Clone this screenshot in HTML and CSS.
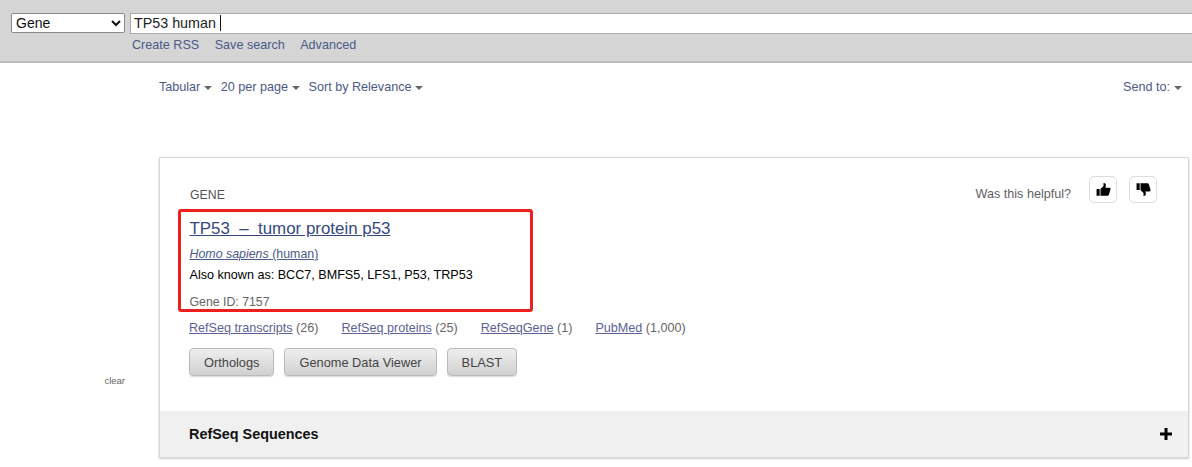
FILE: index.html
```html
<!DOCTYPE html>
<html lang="en">
<head>
<meta charset="utf-8">
<title>TP53 human - Gene</title>
<link rel="stylesheet" href="styles.css">
</head>
<body>
<header class="searchbar">
  <div class="search-row">
    <select class="db-select"><option>Gene</option></select>
    <div class="term">TP53 human <span class="caret"></span></div>
  </div>
  <nav class="search-links">
    <a>Create RSS</a><a>Save search</a><a>Advanced</a>
  </nav>
</header>
<div class="content">
  <aside class="left"><span class="clear">clear</span></aside>
  <main class="main">
    <div class="toolbar">
      <div class="display">
        <a class="drop">Tabular</a>
        <a class="drop">20 per page</a>
        <a class="drop">Sort by Relevance</a>
      </div>
      <a class="drop">Send to:</a>
    </div>
    <section class="card">
      <div class="card-body">
        <div class="card-head">
          <div class="label">GENE</div>
          <div class="helpful">
            <span>Was this helpful?</span>
            <button class="thumb" aria-label="Yes">
              <svg width="15" height="15" viewBox="0 0 16 16"><path d="M.6 7.500h3.300v7.200H.6zM4.800 7.500 8 4.200V1c1.700-.2 2.800 1.100 2.500 2.700L10.100 6h4.200c1 0 1.500.9 1.200 1.700l-1.800 5.900c-.2.700-.7 1.100-1.400 1.100H4.800z"/></svg>
            </button>
            <button class="thumb" aria-label="No">
              <svg width="15" height="15" viewBox="0 0 16 16"><path d="M.6 8.500h3.300V1.300H.6zM4.800 8.500 8 11.800V15c1.700.2 2.800-1.100 2.500-2.700L10.100 10h4.200c1 0 1.500-.9 1.200-1.700l-1.800-5.900c-.2-.7-.7-1.100-1.400-1.100H4.800z"/></svg>
            </button>
          </div>
        </div>
        <div class="highlight">
          <a class="title">TP53 &nbsp;&ndash;&nbsp; tumor protein p53</a>
          <div class="organism"><a><em>Homo sapiens</em> (human)</a></div>
          <div class="aka">Also known as: BCC7, BMFS5, LFS1, P53, TRP53</div>
          <div class="geneid">Gene ID: 7157</div>
        </div>
        <div class="related">
          <span><a>RefSeq transcripts</a> (26)</span>
          <span><a>RefSeq proteins</a> (25)</span>
          <span><a>RefSeqGene</a> (1)</span>
          <span><a>PubMed</a> (1,000)</span>
        </div>
        <div class="actions">
          <button class="action">Orthologs</button>
          <button class="action">Genome Data Viewer</button>
          <button class="action">BLAST</button>
        </div>
      </div>
      <div class="accordion">
        <span>RefSeq Sequences</span>
        <svg width="14" height="14" viewBox="0 0 14 14"><path d="M5.500 1h3v4.500H13v3H8.500V13h-3V8.500H1v-3h4.500z"/></svg>
      </div>
    </section>
  </main>
</div>
</body>
</html>
```
FILE: styles.css
```css
* { box-sizing: border-box; }
html, body { margin: 0; padding: 0; }
body {
  width: 1192px;
  height: 467px;
  overflow: hidden;
  background: #fff;
  font-family: "Liberation Sans", Arial, sans-serif;
  font-size: 12px;
  color: #333;
}
a { color: #4a5a88; }

.searchbar {
  height: 63px;
  background: #d5d5d5;
  border-bottom: 2px solid #bdbdbd;
  padding: 13px 0 0 11px;
}
.search-row { display: flex; gap: 5px; }
.db-select {
  width: 114px;
  height: 20px;
  padding: 0;
  font: 14px "Liberation Sans", Arial, sans-serif;
  color: #111;
  background: #fff;
  border: 1px solid #8a8a8a;
  border-radius: 2px;
}
.term {
  flex: 1;
  height: 21px;
  background: #fff;
  border: 1px solid #aaa;
  border-right: 0;
  padding-left: 3px;
  font-size: 14.3px;
  line-height: 19px;
  color: #222;
}
.caret {
  display: inline-block;
  width: 1px;
  height: 16px;
  background: #111;
  vertical-align: -3px;
}
.search-links {
  display: flex;
  gap: 15.5px;
  padding: 4px 0 0 121px;
  font-size: 12.6px;
  line-height: 15px;
}

.content { display: flex; }
.left { width: 159px; flex: none; padding: 310px 34px 0 0; text-align: right; }
.clear { font-size: 9.5px; line-height: 12px; color: #666; }
.main { width: 1030px; flex: none; }

.toolbar {
  display: flex;
  justify-content: space-between;
  padding: 16px 7px 0 0;
  height: 94px;
  font-size: 12.6px;
  line-height: 17px;
}
.display { display: flex; gap: 8.5px; }
.drop::after {
  content: "";
  display: inline-block;
  margin-left: 4px;
  border-left: 4px solid transparent;
  border-right: 4px solid transparent;
  border-top: 4px solid #666;
  vertical-align: 1px;
}

.card {
  height: 301px;
  border: 1px solid #d6d6d6;
  box-shadow: 0 1px 2px rgba(0,0,0,.2);
  display: flex;
  flex-direction: column;
  justify-content: space-between;
}
.card-body { padding: 23px 31px 0 29px; }
.card-head { display: flex; justify-content: space-between; height: 28px; }
.label { font-size: 12.3px; line-height: 28px; color: #555; margin-left: 1px; }
.helpful { display: flex; gap: 12px; color: #5f5f66; font-size: 12.6px; line-height: 26px; }
.helpful > span { margin-right: 6px; }
.thumb {
  width: 28px;
  height: 27px;
  margin-top: -5px;
  padding: 0;
  display: flex;
  align-items: center;
  justify-content: center;
  background: #fff;
  border: 1px solid #ddd;
  border-radius: 5px;
}
.highlight {
  width: 355px;
  height: 103px;
  margin-left: -11px;
  padding: 6px 0 0 8.500px;
  border: 3px solid #f01f1f;
  border-radius: 3px;
}
.title {
  display: block;
  font-size: 16.9px;
  line-height: 21px;
  text-decoration: underline;
  color: #34487e;
}
.organism { margin-top: 8px; font-size: 12.4px; line-height: 15px; }
.organism a { text-decoration: underline; }
.aka { margin-top: 6px; font-size: 12.6px; line-height: 15px; color: #000; }
.geneid { margin-top: 12px; font-size: 12.3px; line-height: 15px; color: #666; }
.related {
  display: flex;
  gap: 23px;
  padding-top: 8px;
  font-size: 12.6px;
  line-height: 16px;
  color: #666;
}
.related a { color: #5c6296; text-decoration: underline; }
.actions { display: flex; gap: 10px; padding-top: 12px; }
.action {
  height: 28px;
  padding: 0 14px;
  font: 12.8px "Liberation Sans", Arial, sans-serif;
  color: #444;
  background: linear-gradient(#efefef, #d0d0d0);
  border: 1px solid #bbb;
  border-radius: 4px;
  box-shadow: 0 1px 1px rgba(0,0,0,.15);
}
.accordion {
  height: 46px;
  background: #f0f0f0;
  display: flex;
  align-items: center;
  justify-content: space-between;
  padding: 0 15px 0 29px;
  font-size: 14.4px;
  font-weight: bold;
  color: #111;
}
```
